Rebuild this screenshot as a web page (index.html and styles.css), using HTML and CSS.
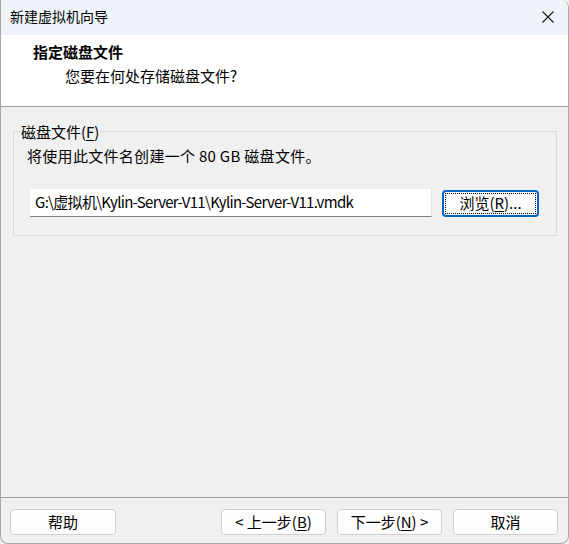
FILE: index.html
```html
<!DOCTYPE html>
<html lang="zh-CN">
<head>
<meta charset="utf-8">
<title>新建虚拟机向导</title>
<link rel="stylesheet" href="styles.css">
</head>
<body>
<div class="window">
  <div class="titlebar">
    <span class="title">新建虚拟机向导</span>
    <svg class="close" width="12" height="12" viewBox="0 0 12 12"><path d="M0.5 0.5 L11.5 11.5 M11.5 0.5 L0.5 11.5" stroke="#1a1a1a" stroke-width="1.1" fill="none"/></svg>
  </div>
  <div class="header">
    <div class="h-title">指定磁盘文件</div>
    <div class="h-sub">您要在何处存储磁盘文件?</div>
  </div>
  <div class="content">
    <fieldset class="group">
      <legend>磁盘文件(<u>F</u>)</legend>
      <div class="desc">将使用此文件名创建一个 80 GB 磁盘文件。</div>
      <div class="row">
        <div class="input">G:\虚拟机\Kylin-Server-V11\Kylin-Server-V11.vmdk</div>
        <button class="btn browse"><span class="focus">浏览(<u>R</u>)...</span></button>
      </div>
    </fieldset>
  </div>
  <div class="footer">
    <button class="btn help">帮助</button>
    <div class="spacer"></div>
    <button class="btn">&lt; 上一步(<u>B</u>)</button>
    <button class="btn">下一步(<u>N</u>) &gt;</button>
    <button class="btn">取消</button>
  </div>
</div>
</body>
</html>
```
FILE: styles.css
```css
* { box-sizing: border-box; }
html, body { margin: 0; padding: 0; background: #f0f0f0; }
body {
  font-family: "Noto Sans CJK SC", "Noto Sans", sans-serif;
  font-size: 15px;
  color: #000;
}
.window {
  width: 569px;
  height: 544px;
  display: flex;
  flex-direction: column;
  border: 1px solid #a8a8a8;
  border-top: none;
  border-radius: 0 8px 8px 8px;
  overflow: hidden;
  background: #f0f0f0;
}
.titlebar {
  height: 35px;
  flex: none;
  background: #eef4f9;
  display: flex;
  align-items: center;
  justify-content: space-between;
  padding: 0 14px 3px 9px;
  font-size: 14px;
}
.title { line-height: 20px; }
.close { display: block; margin-top: 2px; }
.header {
  height: 72px;
  flex: none;
  background: #fff;
  border-bottom: 1px solid #a0a0a0;
  padding: 7px 0 0 32px;
}
.h-title { font-weight: bold; line-height: 20px; }
.h-sub { padding-left: 32px; line-height: 20px; margin-top: 4px; }
.content {
  flex: 1;
  padding: 15px 11px 0 12px;
}
.group {
  margin: 0;
  min-width: 0;
  border: 1px solid #dadada;
  padding: 5px 16px 18px 13px;
}
.group legend {
  padding: 0 1px;
  margin-left: -7px;
  line-height: 19px;
}
.desc { line-height: 20px; letter-spacing: 0.3px; }
.row {
  display: flex;
  align-items: center;
  margin: 23px 0 0 3px;
  gap: 10px;
}
.input {
  width: 402px;
  height: 28px;
  flex: none;
  background: #fff;
  border-bottom: 1px solid #808080;
  border-right: 1px solid #e4e4e4;
  padding: 3px 0 0 5px;
  line-height: 20px;
  white-space: nowrap;
  letter-spacing: -0.7px;
  overflow: hidden;
}
.btn {
  font: inherit;
  color: #000;
  width: 105px;
  height: 26px;
  background: #fdfdfd;
  border: 1px solid #d0d0d0;
  border-radius: 4px;
  padding: 0;
  line-height: 20px;
}
.btn.help { width: 106px; }
.browse {
  width: 97px;
  height: 27px;
  flex: none;
  border: 2px solid #0067c0;
  border-radius: 4px;
  padding: 1px;
}
.browse .focus {
  display: flex;
  align-items: center;
  justify-content: center;
  height: 100%;
  border: 1px dotted #000;
}
.footer {
  height: 46px;
  flex: none;
  border-top: 1px solid #a0a0a0;
  display: flex;
  padding: 11px 10px 0 9px;
  gap: 11px;
}
.footer .spacer { flex: 1; }
u { text-decoration-thickness: 1px; text-underline-offset: 2px; }
```
